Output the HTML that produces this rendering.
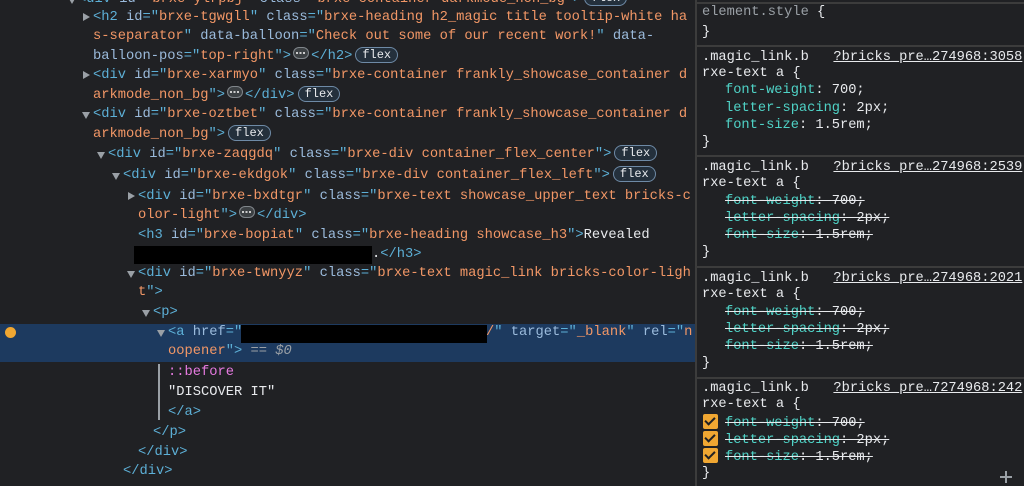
<!DOCTYPE html>
<html><head><meta charset="utf-8"><style>
body{margin:0;width:1024px;height:486px;background:#202124;overflow:hidden;position:relative;font-family:"Liberation Mono",monospace;}
.l{position:absolute;white-space:pre;font-size:13.75px;line-height:19.5px;height:19.5px;color:#e8eaed;}
.t{color:#5db0d7}.a{color:#9bbbdc}.v{color:#f29766}.w{color:#e8eaed}.g{color:#9aa0a6}.p{color:#e67ae0}
.tri{display:inline-block;width:0;height:0;border-top:4.5px solid transparent;border-bottom:4.5px solid transparent;border-left:7px solid #9aa0a6;position:absolute;top:5px}
.trd{display:inline-block;width:0;height:0;border-left:4.5px solid transparent;border-right:4.5px solid transparent;border-top:7px solid #9aa0a6;position:absolute;top:7px}
.fx{display:inline-block;font-size:12px;line-height:14px;padding:0 6px;border:1px solid #6e8aa6;border-radius:8px;background:#24303c;color:#e8eaed;vertical-align:1px;margin-left:3px}
.el{display:inline-block;width:14px;height:10px;border:1px solid #80868b;border-radius:6px;background:#3c4043;vertical-align:0px;margin:0 2px;position:relative}
.el:after{content:"";position:absolute;left:2px;top:4px;width:2px;height:2px;background:#ccc;box-shadow:3.5px 0 #ccc,7px 0 #ccc}
.blk{position:absolute;background:#000}
.r{position:absolute;white-space:pre;font-size:13.7px;line-height:17.5px;color:#e8eaed}
.pn{color:#4fd2c6}.s{text-decoration:line-through}
.ln{color:#e8eaed;text-decoration:underline}
.hr{position:absolute;left:696px;right:0;height:2px;background:#3c3c3c}
.cb{display:inline-block;width:15px;height:15px;background:#f0a732;border-radius:2px;vertical-align:-3px;margin-right:7px;position:relative}
.cb:after{content:"";position:absolute;left:4px;top:1px;width:4px;height:8px;border:solid #202124;border-width:0 2px 2px 0;transform:rotate(45deg)}
</style></head><body>
<div style="position:absolute;left:0;top:324px;width:695px;height:38px;background:#1d3a5f"></div>
<div style="position:absolute;left:5px;top:327px;width:11px;height:11px;border-radius:50%;background:#f0a732"></div>
<div style="position:absolute;left:158px;top:364px;width:2px;height:56px;background:#9aa0a6"></div>

<div class="l" style="left:78px;top:-10px"><span class="trd" style="left:-10px"></span><span class="t">&lt;div </span><span class="a">id</span><span class="t">="</span><span class="v">brxe-ylrpbj</span><span class="t">" </span><span class="a">class</span><span class="t">="</span><span class="v">brxe-container darkmode_non_bg</span><span class="t">"&gt;</span><span class="fx">flex</span></div>

<div class="l" style="left:93px;top:8px"><span class="tri" style="left:-10px"></span><span class="t">&lt;h2 </span><span class="a">id</span><span class="t">="</span><span class="v">brxe-tgwgll</span><span class="t">" </span><span class="a">class</span><span class="t">="</span><span class="v">brxe-heading h2_magic title tooltip-white ha</span></div>
<div class="l" style="left:93px;top:27px"><span class="v">s-separator</span><span class="t">" </span><span class="a">data-balloon</span><span class="t">="</span><span class="v">Check out some of our recent work!</span><span class="t">" </span><span class="a">data-</span></div>
<div class="l" style="left:93px;top:47px"><span class="a">balloon-pos</span><span class="t">="</span><span class="v">top-right</span><span class="t">"&gt;</span><span class="el"></span><span class="t">&lt;/h2&gt;</span><span class="fx">flex</span></div>
<div class="l" style="left:93px;top:66px"><span class="tri" style="left:-10px"></span><span class="t">&lt;div </span><span class="a">id</span><span class="t">="</span><span class="v">brxe-xarmyo</span><span class="t">" </span><span class="a">class</span><span class="t">="</span><span class="v">brxe-container frankly_showcase_container d</span></div>
<div class="l" style="left:93px;top:86px"><span class="v">arkmode_non_bg</span><span class="t">"&gt;</span><span class="el"></span><span class="t">&lt;/div&gt;</span><span class="fx">flex</span></div>
<div class="l" style="left:93px;top:105px"><span class="trd" style="left:-11px"></span><span class="t">&lt;div </span><span class="a">id</span><span class="t">="</span><span class="v">brxe-oztbet</span><span class="t">" </span><span class="a">class</span><span class="t">="</span><span class="v">brxe-container frankly_showcase_container d</span></div>
<div class="l" style="left:93px;top:125px"><span class="v">arkmode_non_bg</span><span class="t">"&gt;</span><span class="fx">flex</span></div>
<div class="l" style="left:108px;top:145px"><span class="trd" style="left:-11px"></span><span class="t">&lt;div </span><span class="a">id</span><span class="t">="</span><span class="v">brxe-zaqgdq</span><span class="t">" </span><span class="a">class</span><span class="t">="</span><span class="v">brxe-div container_flex_center</span><span class="t">"&gt;</span><span class="fx">flex</span></div>
<div class="l" style="left:123px;top:166px"><span class="trd" style="left:-11px"></span><span class="t">&lt;div </span><span class="a">id</span><span class="t">="</span><span class="v">brxe-ekdgok</span><span class="t">" </span><span class="a">class</span><span class="t">="</span><span class="v">brxe-div container_flex_left</span><span class="t">"&gt;</span><span class="fx">flex</span></div>
<div class="l" style="left:138px;top:187px"><span class="tri" style="left:-10px"></span><span class="t">&lt;div </span><span class="a">id</span><span class="t">="</span><span class="v">brxe-bxdtgr</span><span class="t">" </span><span class="a">class</span><span class="t">="</span><span class="v">brxe-text showcase_upper_text bricks-c</span></div>
<div class="l" style="left:138px;top:206px"><span class="v">olor-light</span><span class="t">"&gt;</span><span class="el"></span><span class="t">&lt;/div&gt;</span></div>
<div class="l" style="left:138px;top:226px"><span class="t">&lt;h3 </span><span class="a">id</span><span class="t">="</span><span class="v">brxe-bopiat</span><span class="t">" </span><span class="a">class</span><span class="t">="</span><span class="v">brxe-heading showcase_h3</span><span class="t">"&gt;</span><span class="w">Revealed</span></div>
<div class="blk" style="left:134px;top:246px;width:238px;height:18px"></div>
<div class="l" style="left:372px;top:245px"><span class="w">.</span><span class="t">&lt;/h3&gt;</span></div>
<div class="l" style="left:138px;top:264px"><span class="trd" style="left:-11px"></span><span class="t">&lt;div </span><span class="a">id</span><span class="t">="</span><span class="v">brxe-twnyyz</span><span class="t">" </span><span class="a">class</span><span class="t">="</span><span class="v">brxe-text magic_link bricks-color-ligh</span></div>
<div class="l" style="left:138px;top:283px"><span class="v">t</span><span class="t">"&gt;</span></div>
<div class="l" style="left:153px;top:303px"><span class="trd" style="left:-11px"></span><span class="t">&lt;p&gt;</span></div>
<div class="l" style="left:168px;top:323px"><span class="trd" style="left:-11px"></span><span class="t">&lt;a </span><span class="a">href</span><span class="t">="</span></div>
<div class="l" style="left:486px;top:323px"><span class="v">/</span><span class="t">" </span><span class="a">target</span><span class="t">="</span><span class="v">_blank</span><span class="t">" </span><span class="a">rel</span><span class="t">="</span><span class="v">n</span></div>
<div class="blk" style="left:241px;top:325px;width:246px;height:18px"></div>
<div class="l" style="left:168px;top:342px"><span class="v">oopener</span><span class="t">"&gt;</span><span class="g"> == <i>$0</i></span></div>
<div class="l" style="left:168px;top:363px"><span class="p">::before</span></div>
<div class="l" style="left:168px;top:383px"><span class="w">"DISCOVER IT"</span></div>
<div class="l" style="left:168px;top:403px"><span class="t">&lt;/a&gt;</span></div>
<div class="l" style="left:153px;top:423px"><span class="t">&lt;/p&gt;</span></div>
<div class="l" style="left:138px;top:443px"><span class="t">&lt;/div&gt;</span></div>
<div class="l" style="left:123px;top:462px"><span class="t">&lt;/div&gt;</span></div>

<div style="position:absolute;left:695px;top:0;width:2px;height:486px;background:#3c3c3c"></div>
<div class="hr" style="top:2px"></div>
<div class="hr" style="top:45px"></div>
<div class="hr" style="top:155px"></div>
<div class="hr" style="top:266px"></div>
<div class="hr" style="top:377px"></div>

<div class="r" style="left:702px;top:4px"><span class="g">element.style</span> {</div>
<div class="r" style="left:702px;top:24px">}</div>

<div class="r" style="left:702px;top:49px">.magic_link.b   <span class="ln">?bricks_pre…274968:3058</span></div>
<div class="r" style="left:702px;top:65px">rxe-text a {</div>
<div class="r" style="left:725px;top:82px"><span class="pn">font-weight</span>: 700;</div>
<div class="r" style="left:725px;top:100px"><span class="pn">letter-spacing</span>: 2px;</div>
<div class="r" style="left:725px;top:117px"><span class="pn">font-size</span>: 1.5rem;</div>
<div class="r" style="left:702px;top:134px">}</div>

<div class="r" style="left:702px;top:159px">.magic_link.b   <span class="ln">?bricks_pre…274968:2539</span></div>
<div class="r" style="left:702px;top:175px">rxe-text a {</div>
<div class="r s" style="left:725px;top:193px"><span class="pn">font-weight</span>: 700;</div>
<div class="r s" style="left:725px;top:210px"><span class="pn">letter-spacing</span>: 2px;</div>
<div class="r s" style="left:725px;top:227px"><span class="pn">font-size</span>: 1.5rem;</div>
<div class="r" style="left:702px;top:244px">}</div>

<div class="r" style="left:702px;top:270px">.magic_link.b   <span class="ln">?bricks_pre…274968:2021</span></div>
<div class="r" style="left:702px;top:286px">rxe-text a {</div>
<div class="r s" style="left:725px;top:304px"><span class="pn">font-weight</span>: 700;</div>
<div class="r s" style="left:725px;top:321px"><span class="pn">letter-spacing</span>: 2px;</div>
<div class="r s" style="left:725px;top:338px"><span class="pn">font-size</span>: 1.5rem;</div>
<div class="r" style="left:702px;top:355px">}</div>

<div class="r" style="left:702px;top:380px">.magic_link.b   <span class="ln">?bricks_pre…7274968:242</span></div>
<div class="r" style="left:702px;top:396px">rxe-text a {</div>
<div class="r" style="left:703px;top:414px"><span class="cb"></span><span class="s"><span class="pn">font-weight</span>: 700;</span></div>
<div class="r" style="left:703px;top:431px"><span class="cb"></span><span class="s"><span class="pn">letter-spacing</span>: 2px;</span></div>
<div class="r" style="left:703px;top:448px"><span class="cb"></span><span class="s"><span class="pn">font-size</span>: 1.5rem;</span></div>
<div class="r" style="left:702px;top:465px">}</div>
<div style="position:absolute;left:1000px;top:476px;width:12px;height:2px;background:#9aa0a6"></div>
<div style="position:absolute;left:1005px;top:471px;width:2px;height:12px;background:#9aa0a6"></div>
</body></html>
